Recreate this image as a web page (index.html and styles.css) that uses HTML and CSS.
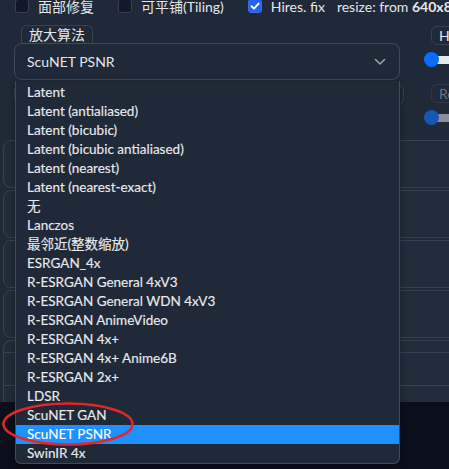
FILE: index.html
```html
<!DOCTYPE html>
<html>
<head>
<meta charset="utf-8">
<link rel="stylesheet" href="styles.css">
</head>
<body>
<div class="page">
  <div class="checks">
    <label class="check"><span class="box"></span><span class="txt">面部修复</span></label>
    <label class="check"><span class="box"></span><span class="txt">可平铺(Tiling)</span></label>
    <label class="check"><span class="box on"><svg viewBox="0 0 14 14" width="14" height="14"><path d="M3.5 7.2 L6 9.6 L10.6 4.6" fill="none" stroke="#fff" stroke-width="1.9" stroke-linecap="round" stroke-linejoin="round"/></svg></span><span class="txt">Hires. fix</span></label>
    <span class="resize">resize: from <b>640x832</b> to <b>1280x1664</b></span>
  </div>
  <div class="main">
    <div class="left">
      <span class="badge">放大算法</span>
      <div class="select">
        <span>ScuNET PSNR</span>
        <svg class="chev" viewBox="0 0 12 8" width="12" height="8"><path d="M1.5 1.5 L6 6 L10.5 1.5" fill="none" stroke="#9ca3af" stroke-width="1.5" stroke-linecap="round" stroke-linejoin="round"/></svg>
      </div>
      <div class="ghost"></div>
    </div>
    <div class="right">
      <span class="badge">Hires steps</span>
      <div class="slider"><span class="thumb"></span></div>
      <span class="badge dim">Resize width to</span>
      <div class="slider dim"><span class="thumb"></span></div>
    </div>
  </div>
  <div class="stack">
    <div class="block"></div>
    <div class="block"></div>
    <div class="block"></div>
    <div class="block"></div>
    <div class="block last"><div class="inner"></div></div>
  </div>
</div>
<ul class="menu">
  <li>Latent</li>
  <li>Latent (antialiased)</li>
  <li>Latent (bicubic)</li>
  <li>Latent (bicubic antialiased)</li>
  <li>Latent (nearest)</li>
  <li>Latent (nearest-exact)</li>
  <li>无</li>
  <li>Lanczos</li>
  <li>最邻近(整数缩放)</li>
  <li>ESRGAN_4x</li>
  <li>R-ESRGAN General 4xV3</li>
  <li>R-ESRGAN General WDN 4xV3</li>
  <li>R-ESRGAN AnimeVideo</li>
  <li>R-ESRGAN 4x+</li>
  <li>R-ESRGAN 4x+ Anime6B</li>
  <li>R-ESRGAN 2x+</li>
  <li>LDSR</li>
  <li>ScuNET GAN</li>
  <li class="sel">ScuNET PSNR</li>
  <li>SwinIR 4x</li>
</ul>
<svg class="mark" viewBox="0 0 134 46" width="134" height="46"><ellipse cx="67" cy="23" rx="64.5" ry="20.5" fill="none" stroke="#e3262b" stroke-width="2.6"/></svg>
</body>
</html>
```

FILE: styles.css
```css
html, body {
  margin: 0;
  padding: 0;
  width: 449px;
  height: 469px;
  overflow: hidden;
  background: #0b0f19;
  font-family: Lato, "Noto Sans CJK SC", sans-serif;
  color: #e5e7eb;
}
.page {
  position: relative;
  height: 402px;
  background: #1f2937;
  overflow: hidden;
}
.checks {
  display: flex;
  align-items: center;
  height: 14px;
  margin-top: -1px;
  padding-left: 15px;
  white-space: nowrap;
  font-size: 14px;
}
.check {
  display: flex;
  align-items: center;
  margin-right: 24px;
}
.box {
  width: 12px;
  height: 12px;
  border: 1px solid #374151;
  border-radius: 3px;
  background: #111827;
  margin-right: 9px;
  display: flex;
}
.box.on {
  background: #2563eb;
  border-color: #3b6fe0;
}
.box.on svg { margin: -1px; }
.check:nth-child(3) { margin-right: 12px; }
.resize b { font-weight: 700; }
.main {
  display: grid;
  grid-template-columns: 404px 1fr;
}
.left {
  padding: 12px 0 0 14px;
  display: flex;
  flex-direction: column;
  align-items: flex-start;
}
.badge {
  display: inline-block;
  height: 17px;
  line-height: 17px;
  padding: 0 7px;
  border: 1px solid #374151;
  border-bottom: none;
  border-radius: 6px 6px 0 0;
  font-size: 14px;
  color: #e5e7eb;
  white-space: nowrap;
  margin-left: 7px;
  box-sizing: content-box;
}
.select {
  box-sizing: border-box;
  width: 386px;
  height: 37px;
  border: 1px solid #3f4a5a;
  border-radius: 8px;
  display: flex;
  align-items: center;
  justify-content: space-between;
  padding: 0 13px 0 12px;
  font-size: 14px;
  color: #e5e7eb;
}
.ghost {
  box-sizing: border-box;
  width: 390px;
  height: 23px;
  margin-top: 3px;
  border: 1px solid #374151;
  border-radius: 8px;
}
.right {
  padding: 13px 0 0 20px;
  display: flex;
  flex-direction: column;
  align-items: flex-start;
  white-space: nowrap;
}
.right .badge {
  margin-left: 7px;
  border-bottom: 1px solid #374151;
  border-radius: 6px;
  height: 17px;
}
.right .badge.dim {
  margin-top: 17px;
  color: #6b7280;
  border-color: #2e3846;
}
.slider {
  position: relative;
  margin-top: 7px;
  width: 60px;
  height: 15px;
  display: flex;
  align-items: center;
}
.slider::before {
  content: "";
  flex: 1;
  height: 8px;
  margin-left: 6px;
  border-radius: 4px;
  background: #e5e7eb;
}
.thumb {
  position: absolute;
  left: 0;
  top: 0;
  width: 15px;
  height: 15px;
  border-radius: 50%;
  background: #0a6cff;
}
.slider.dim::before { background: #8a9099; }
.slider.dim .thumb { background: #1558b4; }
.stack {
  margin-top: 15px;
  margin-left: 3px;
  margin-right: -12px;
  display: flex;
  flex-direction: column;
  gap: 2px;
}
.block {
  box-sizing: border-box;
  height: 48px;
  border: 1px solid #374151;
  border-radius: 8px;
  background: #212b3a;
}
.block.last {
  height: 70px;
  padding-top: 11px;
}
.inner {
  height: 32px;
  border-top: 1px solid #374151;
  border-bottom: 1px solid #374151;
}
.menu {
  position: absolute;
  left: 15px;
  top: 81px;
  width: 383px;
  margin: 0;
  padding: 2px 0 0 0;
  list-style: none;
  background: #1f2937;
  border: 1px solid #404a59;
  border-top: none;
  border-radius: 0 0 6px 6px;
  box-shadow: 0 2px 6px rgba(0, 0, 0, 0.35);
  font-size: 13.5px;
}
.menu li {
  height: 19px;
  line-height: 19px;
  padding-left: 11px;
  color: #e8eaee;
  white-space: nowrap;
  -webkit-text-stroke: 0.15px #e8eaee;
}
.menu li.sel {
  background: #1e90ff;
  color: #ffffff;
}
.mark {
  position: absolute;
  left: 1px;
  top: 401px;
}
```
